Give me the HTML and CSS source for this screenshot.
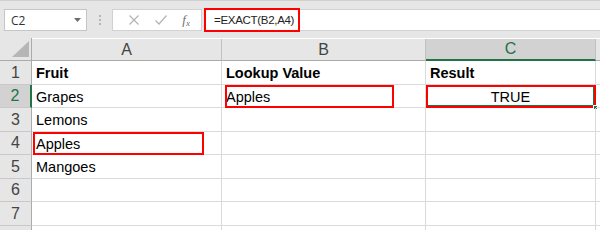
FILE: index.html
```html
<!DOCTYPE html>
<html>
<head>
<meta charset="utf-8">
<link rel="stylesheet" href="styles.css">
</head>
<body>
<div class="app">
  <div class="toolbar">
    <div class="namebox">
      <span class="name">C2</span>
      <svg class="caret" width="7" height="4" viewBox="0 0 7 4"><polygon points="0,0 7,0 3.5,4" fill="#6d6d6d"/></svg>
    </div>
    <div class="grip"><i></i><i></i><i></i></div>
    <div class="fxbtns">
      <svg width="12" height="12" viewBox="0 0 12 12"><path d="M1.5 1.5 L10.5 10.5 M10.5 1.5 L1.5 10.5" stroke="#b3b3b3" stroke-width="1.2" fill="none"/></svg>
      <svg width="14" height="12" viewBox="0 0 14 12"><path d="M1.5 6.5 L5 10 L12.5 1.5" stroke="#b3b3b3" stroke-width="1.2" fill="none"/></svg>
      <span class="fx">f<sub>x</sub></span>
    </div>
    <div class="formula">
      <span class="ftext">=EXACT(B2,A4)</span>
      <div class="fmark"></div>
    </div>
  </div>
  <div class="sheet">
    <div class="corner"><svg width="17" height="16" viewBox="0 0 17 16"><polygon points="17,0 17,16 0,16" fill="#b6b6b6"/></svg></div>
    <div class="colh">A</div>
    <div class="colh">B</div>
    <div class="colh sel">C</div>
    <div class="colh last"></div>

    <div class="rowh">1</div>
    <div class="cell b">Fruit</div>
    <div class="cell b">Lookup Value</div>
    <div class="cell b">Result</div>
    <div class="cell last"></div>

    <div class="rowh sel">2</div>
    <div class="cell">Grapes</div>
    <div class="cell"><span>Apples</span><div class="mark mark-b2"></div></div>
    <div class="cell active center"><span>TRUE</span><div class="mark mark-c2"></div><div class="handle"></div></div>
    <div class="cell last"></div>

    <div class="rowh">3</div>
    <div class="cell">Lemons</div>
    <div class="cell"></div>
    <div class="cell"></div>
    <div class="cell last"></div>

    <div class="rowh">4</div>
    <div class="cell"><span>Apples</span><div class="mark mark-a4"></div></div>
    <div class="cell"></div>
    <div class="cell"></div>
    <div class="cell last"></div>

    <div class="rowh">5</div>
    <div class="cell">Mangoes</div>
    <div class="cell"></div>
    <div class="cell"></div>
    <div class="cell last"></div>

    <div class="rowh">6</div>
    <div class="cell"></div>
    <div class="cell"></div>
    <div class="cell"></div>
    <div class="cell last"></div>

    <div class="rowh">7</div>
    <div class="cell"></div>
    <div class="cell"></div>
    <div class="cell"></div>
    <div class="cell last"></div>

    <div class="rowh"></div>
    <div class="cell"></div>
    <div class="cell"></div>
    <div class="cell"></div>
    <div class="cell last"></div>
  </div>
</div>
</body>
</html>
```

FILE: styles.css
```css
* { box-sizing: border-box; }
html, body { margin: 0; padding: 0; }
body {
  width: 600px;
  height: 230px;
  overflow: hidden;
  background: #ffffff;
  font-family: "Liberation Sans", Arial, sans-serif;
}
.app { width: 600px; }

.toolbar {
  height: 38px;
  background: #e6e6e6;
  border-top: 1px solid #d0d0d0;
  display: flex;
  align-items: flex-start;
  padding-top: 8px;
}
.namebox {
  margin-left: 4px;
  width: 83px;
  height: 22px;
  background: #fff;
  border: 1px solid #c6c6c6;
  display: flex;
  align-items: center;
  justify-content: space-between;
  padding: 0 5px 0 6px;
}
.name { font-size: 12px; color: #333; font-family: "Open Sans", "Liberation Sans", sans-serif; }
.grip {
  width: 25px;
  height: 22px;
  display: flex;
  flex-direction: column;
  align-items: center;
  justify-content: center;
  gap: 2px;
}
.grip i { display: block; width: 2px; height: 2px; background: #b5b5b5; }
.fxbtns {
  width: 90px;
  height: 22px;
  background: #fff;
  border: 1px solid #d2d2d2;
  display: flex;
  align-items: center;
  justify-content: space-around;
  padding: 0 4px 0 8px;
}
.fx {
  font-family: "Liberation Serif", serif;
  font-style: italic;
  font-size: 13px;
  color: #707070;
  line-height: 1;
}
.fx sub { font-size: 9px; vertical-align: -2px; }
.formula {
  position: relative;
  flex: 1;
  height: 22px;
  margin-left: 2px;
  background: #fff;
  border-top: 1px solid #d2d2d2;
  border-bottom: 1px solid #d2d2d2;
  display: flex;
  align-items: center;
  padding-left: 10px;
}
.ftext { font-size: 11.5px; color: #222; letter-spacing: -0.3px; }
.fmark {
  position: absolute;
  left: 0;
  top: -2px;
  width: 96px;
  height: 24px;
  border: 2px solid #ff0000;
}

.sheet {
  display: grid;
  grid-template-columns: 32px 190px 204px 170px 1fr;
  grid-template-rows: 23px repeat(8, 23.5px);
}
.corner {
  background: #e6e6e6;
  border-right: 1px solid #ababab;
  border-bottom: 1px solid #ababab;
  display: flex;
  align-items: flex-end;
  justify-content: flex-end;
  padding: 0 2px 3px 0;
}
.colh {
  background: #e6e6e6;
  border-right: 1px solid #c0c0c0;
  border-bottom: 1px solid #ababab;
  margin-top: 1px;
  display: flex;
  align-items: center;
  justify-content: center;
  font-size: 16px;
  color: #444;
}
.colh.sel {
  background: #d2d2d2;
  color: #217346;
  border-bottom: 2px solid #217346;
}
.colh.last { border-right: none; }
.rowh {
  background: #e6e6e6;
  border-right: 1px solid #ababab;
  border-bottom: 1px solid #c8c8c8;
  display: flex;
  align-items: center;
  justify-content: center;
  font-size: 16px;
  color: #444;
  padding-top: 1px;
}
.rowh.sel {
  background: #d2d2d2;
  color: #217346;
  border-right: 2px solid #217346;
}
.cell {
  position: relative;
  border-right: 1px solid #dadada;
  border-bottom: 1px solid #dadada;
  font-size: 14.5px;
  color: #000;
  padding: 4px 0 0 4px;
  white-space: nowrap;
}
.cell.last { border-right: none; }
.cell.b { font-weight: bold; }
.cell.center { text-align: center; padding-left: 0; }
.cell.active { box-shadow: inset 0 0 0 2px #217346; }
.mark {
  position: absolute;
  top: 0;
  height: 23px;
  border: 2px solid #ff0000;
}
.mark-b2 { left: 3px; width: 169px; }
.mark-c2 { left: 0; width: 170px; }
.mark-a4 { left: 1px; width: 171px; }
.handle {
  position: absolute;
  right: -3px;
  bottom: -3px;
  width: 5px;
  height: 5px;
  background: #217346;
  border: 1px solid #fff;
}
```
